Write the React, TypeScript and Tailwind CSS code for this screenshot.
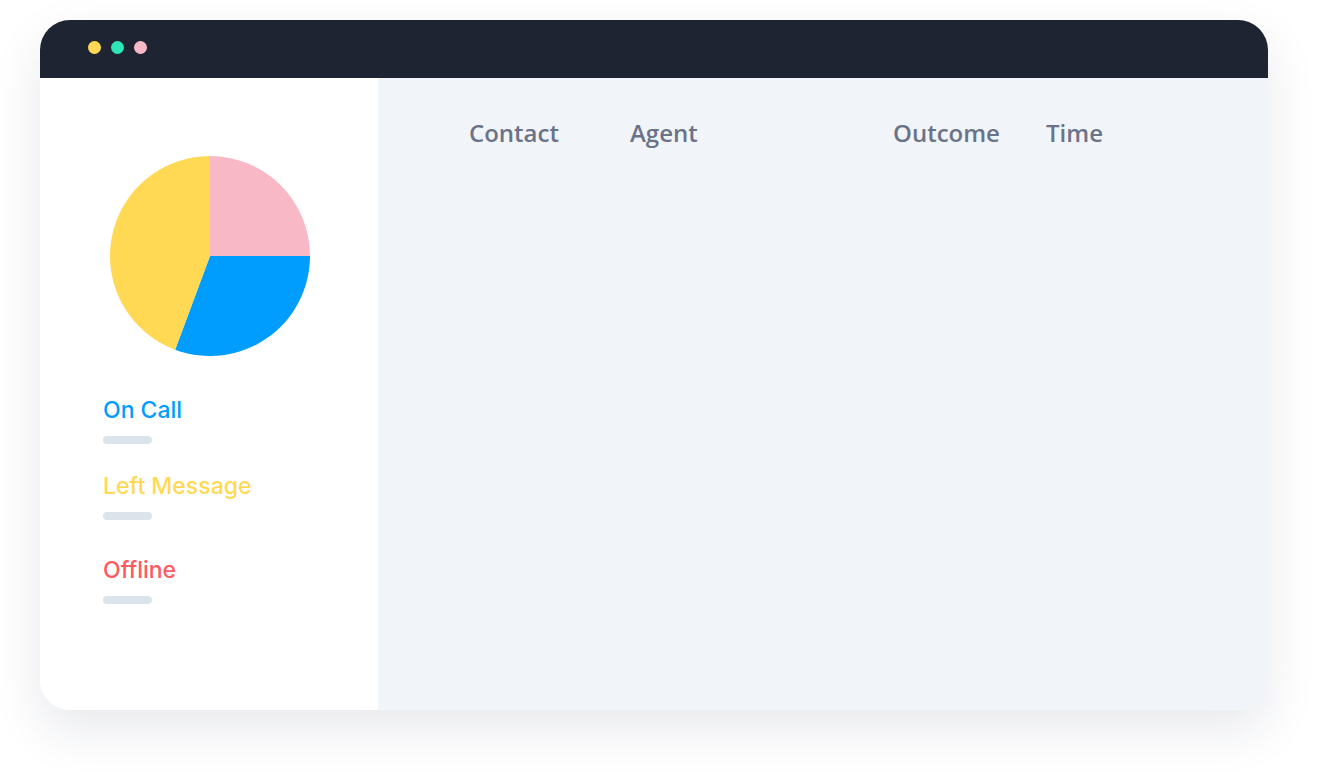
import React from "react";

function Pie() {
  const cx = 100, cy = 100, r = 100;
  const pt = (deg: number) => {
    const a = ((deg - 90) * Math.PI) / 180;
    return [cx + r * Math.cos(a), cy + r * Math.sin(a)];
  };
  const arc = (s: number, e: number) => {
    const [x1, y1] = pt(s);
    const [x2, y2] = pt(e);
    const large = e - s > 180 ? 1 : 0;
    return `M${cx} ${cy} L${x1} ${y1} A${r} ${r} 0 ${large} 1 ${x2} ${y2} Z`;
  };
  return (
    <svg width="200" height="200" viewBox="0 0 200 200">
      <path d={arc(0, 90)} fill="#f9b8c6" />
      <path d={arc(90, 200.4)} fill="#009dff" />
      <path d={arc(200.4, 360)} fill="#ffd954" />
    </svg>
  );
}

export default function App() {
  return (
    <div className="w-[1344px] h-[772px] bg-white pt-[20px] pl-[40px]" style={{ fontFamily: "Inter, 'Noto Sans', sans-serif" }}>
      <div className="w-[1228px] h-[690px] rounded-[30px] flex flex-col overflow-hidden shadow-[0_20px_50px_rgba(30,40,80,0.10)]">
        <div className="h-[58px] bg-[#1f2433] flex items-start pt-[21px] pl-[48px] gap-[10px] shrink-0">
          <div className="w-[13px] h-[13px] rounded-full bg-[#ffd954]" />
          <div className="w-[13px] h-[13px] rounded-full bg-[#2ee6b6]" />
          <div className="w-[13px] h-[13px] rounded-full bg-[#f9b8c6]" />
        </div>
        <div className="flex flex-1">
          <div className="w-[338px] bg-white flex flex-col pl-[63px] pt-[78px]">
            <div className="pl-[7px]">
              <Pie />
            </div>
            <div className="mt-[40px] flex flex-col">
              <div className="text-[23px] leading-[28px] text-[#009dff] font-medium">On Call</div>
              <div className="mt-[12px] w-[49px] h-[8px] rounded-full bg-[#dce3ea]" />
              <div className="mt-[28px] text-[23px] leading-[28px] text-[#ffd954] font-medium">Left Message</div>
              <div className="mt-[12px] w-[49px] h-[8px] rounded-full bg-[#dce3ea]" />
              <div className="mt-[36px] text-[23px] leading-[28px] text-[#ff5a5f] font-medium">Offline</div>
              <div className="mt-[12px] w-[49px] h-[8px] rounded-full bg-[#dce3ea]" />
            </div>
          </div>
          <div className="flex-1 bg-[#f1f5f9] relative">
            <div className="flex pt-[41px] text-[24px] leading-[28px] text-[#6b7388] font-semibold" style={{ fontFamily: "'Open Sans', Arial, sans-serif" }}>
              <div className="ml-[91px] w-[161px]">Contact</div>
              <div className="w-[263px]">Agent</div>
              <div className="w-[153px]">Outcome</div>
              <div>Time</div>
            </div>
          </div>
        </div>
      </div>
    </div>
  );
}
